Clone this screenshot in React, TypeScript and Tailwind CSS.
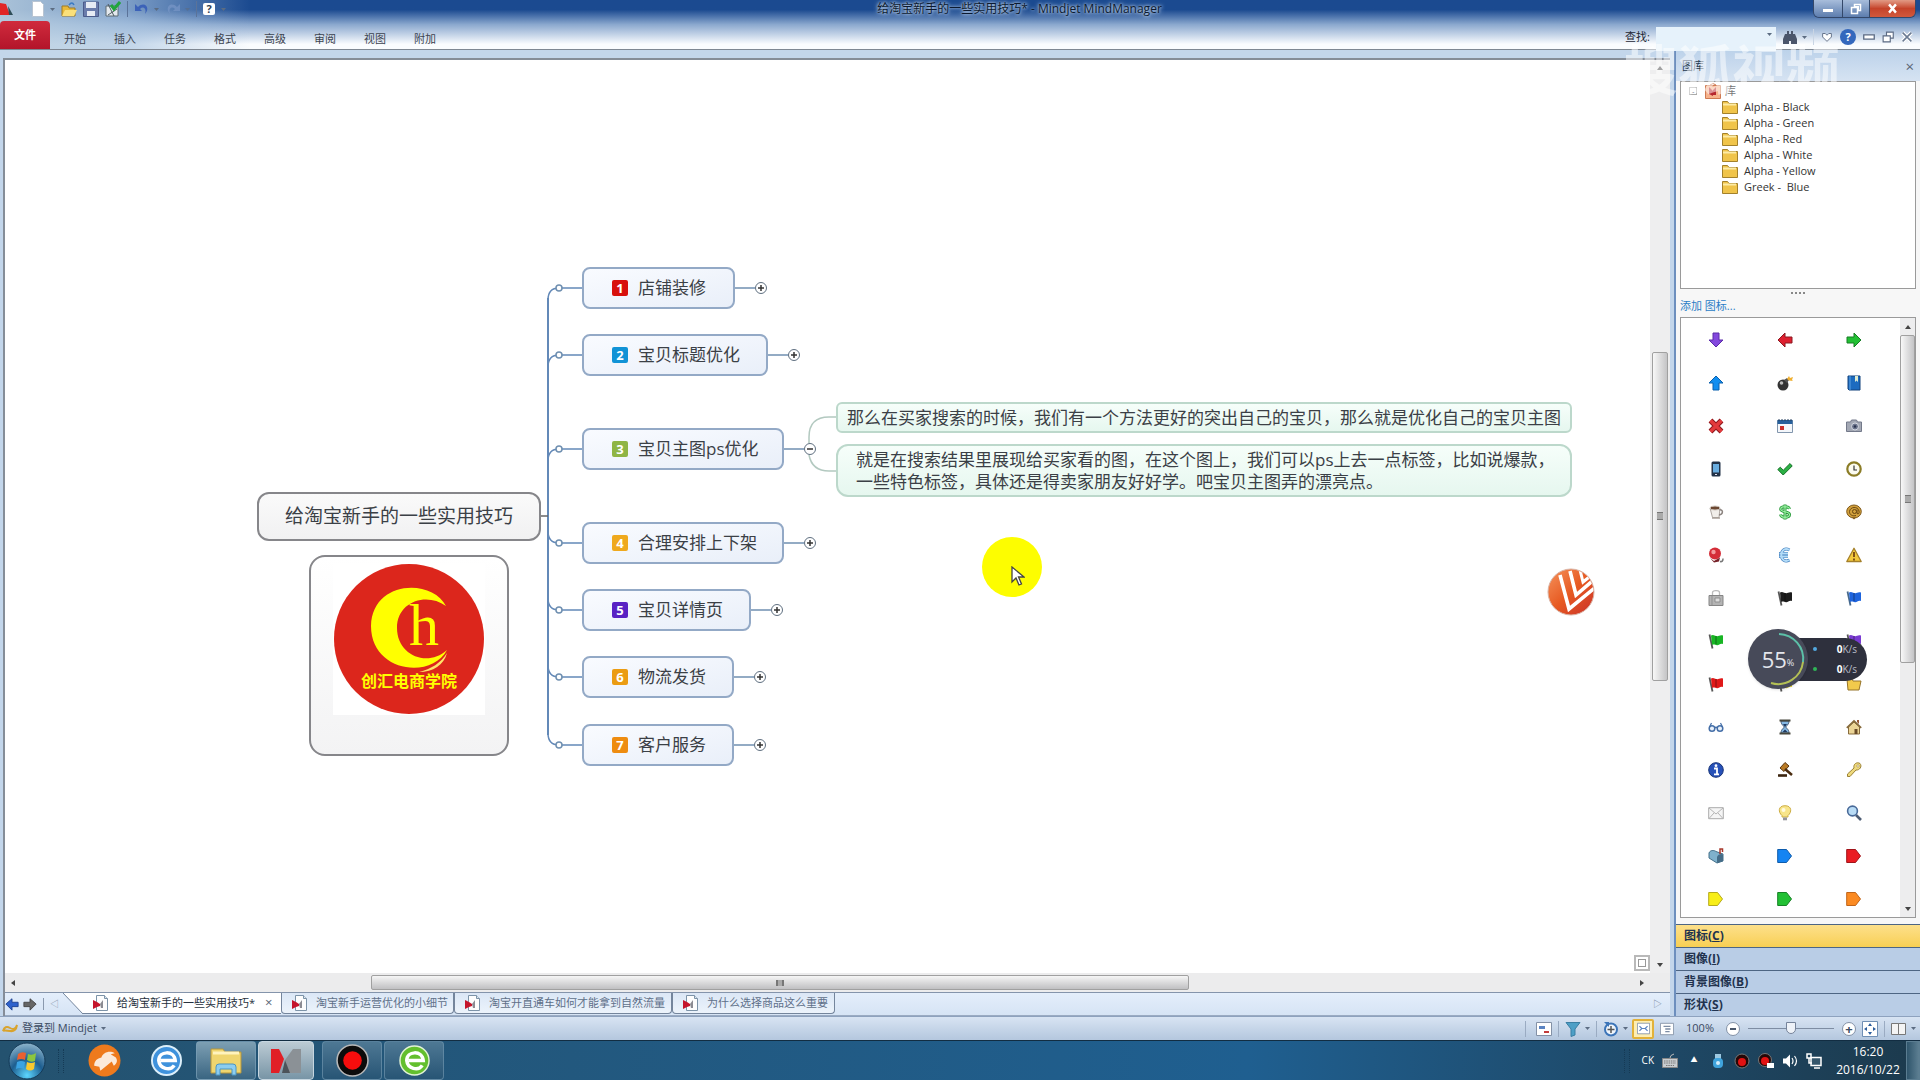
import type { ReactNode } from "react";

const menus = ["开始", "插入", "任务", "格式", "高级", "审阅", "视图", "附加"];

const folders = [
  "Alpha - Black",
  "Alpha - Green",
  "Alpha - Red",
  "Alpha - White",
  "Alpha - Yellow",
  "Greek -  Blue",
];

const branches = [
  { n: 1, label: "店铺装修", y: 228, w: 153, pos: "top-[207px] w-[153px]", badge: "bg-[#d8100c]" },
  { n: 2, label: "宝贝标题优化", y: 295, w: 186, pos: "top-[274px] w-[186px]", badge: "bg-[#1193d6]" },
  { n: 3, label: "宝贝主图ps优化", y: 389, w: 202, pos: "top-[368px] w-[202px]", badge: "bg-[#8fb544]", open: true },
  { n: 4, label: "合理安排上下架", y: 483, w: 202, pos: "top-[462px] w-[202px]", badge: "bg-[#efa91e]" },
  { n: 5, label: "宝贝详情页", y: 550, w: 169, pos: "top-[529px] w-[169px]", badge: "bg-[#5a22c4]" },
  { n: 6, label: "物流发货", y: 617, w: 152, pos: "top-[596px] w-[152px]", badge: "bg-[#eb9c12]" },
  { n: 7, label: "客户服务", y: 685, w: 152, pos: "top-[664px] w-[152px]", badge: "bg-[#ee8c10]" },
];

function Icon({ size = 16, children }: { size?: number; children: ReactNode }) {
  return (
    <svg width={size} height={size} viewBox="0 0 16 16" className="shrink-0" aria-hidden="true">
      {children}
    </svg>
  );
}

function Arrow({ fill, stroke, turn }: { fill: string; stroke: string; turn: number }) {
  return (
    <Icon>
      <path
        d="M5 15V8H1L8 1l7 7h-4v7z"
        transform={`rotate(${turn} 8 8)`}
        fill={fill}
        stroke={stroke}
        strokeLinejoin="round"
      />
    </Icon>
  );
}

function Flag({ fill, pole = "#555" }: { fill: string; pole?: string }) {
  return (
    <Icon>
      <path d="M1.5 1.5l3 14" stroke={pole} strokeWidth="1.8" />
      <path d="M3 2.5c3-2 5 2 8 .3 1.500-.8 2.500-.8 4-.3v8.500c-3-1-4 1.500-6 1.200-2-.2-3-1.200-5-.2z" fill={fill} />
      <path d="M8 3v8" stroke="#000" strokeOpacity=".2" strokeWidth="2" />
    </Icon>
  );
}

function Tag({ fill, stroke }: { fill: string; stroke: string }) {
  return (
    <Icon>
      <path d="M.7 1.500h8.800l5 6.500-5 6.500H.7z" fill={fill} stroke={stroke} strokeLinejoin="round" />
    </Icon>
  );
}

const icons: { name: string; art: ReactNode }[] = [
  { name: "purple down", art: <Arrow fill="#8348dd" stroke="#5a2aa8" turn={180} /> },
  { name: "red left", art: <Arrow fill="#dd2030" stroke="#8c1820" turn={270} /> },
  { name: "green right", art: <Arrow fill="#22c034" stroke="#167d24" turn={90} /> },
  { name: "blue up", art: <Arrow fill="#118ef0" stroke="#0a61ae" turn={0} /> },
  {
    name: "bomb",
    art: (
      <Icon>
        <circle cx="6" cy="10" r="5.500" fill="#333" />
        <circle cx="4.500" cy="8" r="1.800" fill="#bbb" />
        <path d="M7 5l3-2 2 2-2 3z" fill="#555" />
        <path d="M10 4l2-3 1 2 3-1-1 3 1 1-4-.500z" fill="#f0b030" />
      </Icon>
    ),
  },
  {
    name: "book",
    art: (
      <Icon>
        <path d="M2 1h12v14H3L2 14z" fill="#1c6bc0" stroke="#12427c" />
        <path d="M4 1v14" stroke="#5aa2e4" />
        <path d="M9 1h3v6l-1.500-1.500L9 7z" fill="#dfeccf" />
      </Icon>
    ),
  },
  {
    name: "cross",
    art: (
      <Icon>
        <path d="M2.500 2.500l11 11M13.500 2.500l-11 11" stroke="#8d181c" strokeWidth="5.400" />
        <path d="M2.500 2.500l11 11M13.500 2.500l-11 11" stroke="#e33a3c" strokeWidth="3.400" />
      </Icon>
    ),
  },
  {
    name: "calendar",
    art: (
      <Icon>
        <path d="M.5 2.500h15v12H.5z" fill="#f4f7fb" stroke="#8296ad" />
        <path d="M.5 2h15v4H.5z" fill="#27609c" />
        <path d="M2 1v2M5 1v2M8 1v2M11 1v2M14 1v2" stroke="#27415e" />
        <path d="M3 8h4v4H3z" fill="#c9302c" />
      </Icon>
    ),
  },
  {
    name: "camera",
    art: (
      <Icon>
        <path d="M.5 4h4l1-2h5l1 2h4v9.500H.5z" fill="#a3a8b4" stroke="#73798a" />
        <circle cx="9" cy="8.500" r="3.500" fill="#6e778e" stroke="#d5d9e2" />
        <circle cx="9" cy="8.500" r="1.300" fill="#2b3550" />
      </Icon>
    ),
  },
  {
    name: "phone",
    art: (
      <Icon>
        <rect x="3.500" y=".5" width="9" height="15" rx="1.500" fill="#223248" />
        <path d="M5 3h6v8.500H5z" fill="#68acdf" />
        <path d="M7 13.500h2" stroke="#dde" />
      </Icon>
    ),
  },
  {
    name: "check",
    art: (
      <Icon>
        <path d="M.8 8.500l2.500-2.300 3 3L13 2.500 15.200 5l-9 9z" fill="#2bb044" stroke="#157228" strokeLinejoin="round" />
      </Icon>
    ),
  },
  {
    name: "clock",
    art: (
      <Icon>
        <circle cx="8" cy="8" r="6.700" fill="#fbfbf0" stroke="#8b7c26" strokeWidth="2.200" />
        <path d="M8 4.500V9h3" fill="none" stroke="#333" strokeWidth="1.200" />
      </Icon>
    ),
  },
  {
    name: "coffee",
    art: (
      <Icon>
        <path d="M2 4h10l-1 9.500H4.500z" fill="#f1eeea" stroke="#9b928b" strokeWidth=".8" />
        <ellipse cx="7" cy="4" rx="5" ry="2" fill="#6b4731" stroke="#cfc6bf" />
        <path d="M11.500 6c4-1 4 4.500-.5 5" fill="none" stroke="#8c8480" strokeWidth="1.500" />
        <path d="M4 14h8" stroke="#a89f99" strokeWidth="1.500" />
      </Icon>
    ),
  },
  {
    name: "dollar",
    art: (
      <Icon>
        <path
          d="M12.500 5C12 3 10 2.700 8 2.700 5.500 2.700 3.700 3.500 3.700 5.300c0 3.200 8.800 1.700 8.800 5.200 0 2-2 2.800-4.500 2.800-2.300 0-4-.8-4.500-2.800M8 .5v15"
          fill="none"
          stroke="#269a38"
          strokeWidth="3"
        />
        <path
          d="M12.500 5C12 3 10 2.700 8 2.700 5.500 2.700 3.700 3.500 3.700 5.300c0 3.200 8.800 1.700 8.800 5.200 0 2-2 2.800-4.500 2.800-2.300 0-4-.8-4.500-2.800M8 1v14"
          fill="none"
          stroke="#9df0a4"
          strokeWidth="1.200"
        />
      </Icon>
    ),
  },
  {
    name: "mail address",
    art: (
      <Icon>
        <ellipse cx="8" cy="7.500" rx="7.300" ry="6.500" fill="#d2a13c" stroke="#80591a" />
        <path d="M11 5.500v4c1.500 1 2.500-.3 2-2.500C12 2 4 2.500 3.500 7.500 3.300 11 7 12.500 10 11.500" fill="none" stroke="#6b4712" />
        <circle cx="8.500" cy="7.500" r="2" fill="none" stroke="#6b4712" />
        <path d="M6 13.500l2 2 2-2z" fill="#80591a" />
      </Icon>
    ),
  },
  {
    name: "bell",
    art: (
      <Icon>
        <circle cx="7" cy="6.500" r="6" fill="#d42d38" />
        <circle cx="5.500" cy="5" r="2.200" fill="#f39a9d" />
        <path d="M2 11l4 3 6-3.500-1 4-5 1z" fill="#772229" />
        <path d="M12 14.500c2 .5 3-.5 3-3" fill="none" stroke="#777" strokeWidth="1.500" />
      </Icon>
    ),
  },
  {
    name: "euro",
    art: (
      <Icon>
        <path d="M12.500 3C8 .5 4.500 3 4.300 8c.2 5 3.700 7.500 8.200 5M2 6.500h9M2 9.500h9" fill="none" stroke="#3f7cbd" strokeWidth="3" />
        <path d="M12.500 3C8 .5 4.500 3 4.300 8c.2 5 3.700 7.500 8.200 5M2.500 6.500H11M2.500 9.500H11" fill="none" stroke="#b3dcf8" strokeWidth="1.800" />
      </Icon>
    ),
  },
  {
    name: "warning",
    art: (
      <Icon>
        <path d="M8 1.200l7.200 13.300H.8z" fill="#f3c93c" stroke="#a5802a" strokeWidth="1.300" strokeLinejoin="round" />
        <path d="M8 5v5M8 11.500v2" stroke="#6e3f10" strokeWidth="1.700" />
      </Icon>
    ),
  },
  {
    name: "bag",
    art: (
      <Icon>
        <path d="M4.500 5V2.500C4.500 0 11.500 0 11.500 2.500V5" fill="none" stroke="#bbb" strokeWidth="1.300" />
        <path d="M1 5.500h14v10H1z" fill="#b4b4b4" stroke="#858585" />
        <path d="M4 6v9M7 8h5v4H7z" fill="#ddd" stroke="#8f8f8f" />
      </Icon>
    ),
  },
  { name: "black flag", art: <Flag fill="#1c1c1c" /> },
  { name: "blue flag", art: <Flag fill="#1d63dd" pole="#47698c" /> },
  { name: "green flag", art: <Flag fill="#18b524" /> },
  { name: "orange flag", art: <Flag fill="#ef8a1c" /> },
  { name: "purple flag", art: <Flag fill="#7a3bd2" /> },
  { name: "red flag", art: <Flag fill="#e01818" /> },
  { name: "yellow flag", art: <Flag fill="#eedc1c" /> },
  {
    name: "folder",
    art: (
      <Icon>
        <path d="M1 3h5l1 2h8l-2 9H2z" fill="#f2ca4c" stroke="#96742a" strokeLinejoin="round" />
      </Icon>
    ),
  },
  {
    name: "glasses",
    art: (
      <Icon>
        <circle cx="4" cy="9.500" r="2.800" fill="#eaf2fb" stroke="#456fa8" strokeWidth="1.500" />
        <circle cx="12" cy="9.500" r="2.800" fill="#eaf2fb" stroke="#456fa8" strokeWidth="1.500" />
        <path d="M6.500 9q1.500-1.500 3 0M1.500 8l2-4M14.500 8l-2-4" fill="none" stroke="#456fa8" strokeWidth="1.200" />
      </Icon>
    ),
  },
  {
    name: "hourglass",
    art: (
      <Icon>
        <path d="M4 2h8c0 4-3 4.500-3 6s3 2 3 6H4c0-4 3-4.500 3-6S4 6 4 2z" fill="#84b7e2" stroke="#42566e" />
        <path d="M2.500 1.500h11M2.500 14.500h11" stroke="#47473c" strokeWidth="2" />
        <path d="M6 5h4L8 8zM5.500 13L8 10.500l2.500 2.500z" fill="#1f3a60" />
      </Icon>
    ),
  },
  {
    name: "house",
    art: (
      <Icon>
        <path d="M2.500 8v7h11V8L8 3z" fill="#ecd596" stroke="#876b3c" />
        <path d="M.8 8.800L8 2l7.200 6.800" fill="none" stroke="#876b3c" strokeWidth="1.700" />
        <path d="M11 1h2v4l-2-2z" fill="#9a5a36" />
        <path d="M8.500 10h3v5h-3z" fill="#6b4c28" />
      </Icon>
    ),
  },
  {
    name: "info",
    art: (
      <Icon>
        <circle cx="8" cy="8" r="7.300" fill="#2751b8" stroke="#183478" />
        <path d="M6 6.500h3V12M6 12.300h5" fill="none" stroke="#fff" strokeWidth="1.800" />
        <circle cx="8" cy="3.700" r="1.400" fill="#fff" />
      </Icon>
    ),
  },
  {
    name: "gavel",
    art: (
      <Icon>
        <path d="M3 6l5-5.500 4 3.500-5 5.500z" fill="#b87a25" stroke="#5b3712" />
        <path d="M8 7l7 6" stroke="#4a2c10" strokeWidth="2.500" />
        <path d="M1 13.500h9" stroke="#3b240e" strokeWidth="2.600" />
      </Icon>
    ),
  },
  {
    name: "key",
    art: (
      <Icon>
        <path d="M8 6c-1-4 3-6.500 6-4.500 2.500 3-.5 7-4 6.500L4 14.500H1.500V12z" fill="#eed97c" stroke="#9c8235" strokeLinejoin="round" />
        <circle cx="12" cy="4" r="1.200" fill="#fff" stroke="#9c8235" strokeWidth=".6" />
      </Icon>
    ),
  },
  {
    name: "letter",
    art: (
      <Icon>
        <path d="M.7 2.700h14.600v11H.7z" fill="#f5f5f5" stroke="#aaa" />
        <path d="M1 3l7 6 7-6M1 13.500L6 8M15 13.500L10 8" fill="none" stroke="#b5b5b5" />
      </Icon>
    ),
  },
  {
    name: "bulb",
    art: (
      <Icon>
        <path d="M8 .7c-7 0-7 6.500-3 9.800V12h6v-1.500C15 7.200 15 .7 8 .7z" fill="#f8e58a" stroke="#cdae44" />
        <path d="M6 12.500h4v2.800H6z" fill="#96969c" />
        <circle cx="6.500" cy="5" r="2" fill="#fffbe0" />
      </Icon>
    ),
  },
  {
    name: "magnifier",
    art: (
      <Icon>
        <path d="M10 10l5 5" stroke="#4e5d74" strokeWidth="2.600" />
        <circle cx="6.500" cy="6" r="4.900" fill="#b9dcf6" stroke="#496a99" strokeWidth="1.600" />
      </Icon>
    ),
  },
  {
    name: "mailbox",
    art: (
      <Icon>
        <path d="M1 5c1-3 5-3 7-1.500L15 6v7l-6 2-8-5z" fill="#7fb1cc" stroke="#44708a" />
        <path d="M9 15V9c1-3 5-4 6-2v6z" fill="#456d88" />
        <path d="M12 6V1h2.500v3" fill="none" stroke="#a8382c" strokeWidth="1.500" />
      </Icon>
    ),
  },
  { name: "blue tag", art: <Tag fill="#1484f2" stroke="#0e5cac" /> },
  { name: "red tag", art: <Tag fill="#ea1c22" stroke="#a1141a" /> },
  { name: "yellow tag", art: <Tag fill="#f8ee18" stroke="#b5aa1c" /> },
  { name: "green tag", art: <Tag fill="#22c034" stroke="#178226" /> },
  { name: "orange tag", art: <Tag fill="#fb8a22" stroke="#c0651a" /> },
];

function MapIcon() {
  return (
    <Icon>
      <path d="M3.500.5h8l3 3v12h-11z" fill="#fdfdfd" stroke="#7c93a8" />
      <path d="M11.500.5v3h3" fill="#dde8f0" stroke="#7c93a8" />
      <path d="M0 5l4 2 3 2v2l-3 1-4 2z" fill="#c5152c" />
      <path d="M7 9l3-4v8H8z" fill="#8b8b92" />
    </Icon>
  );
}

function FolderIcon() {
  return (
    <Icon>
      <path d="M.5 2.500h5l1.500 2h8.500v10H.5z" fill="#f0c44a" stroke="#a3812b" strokeLinejoin="round" />
      <path d="M1 5.500h13" stroke="#fdeba5" strokeWidth="2" />
    </Icon>
  );
}

function Caret() {
  return (
    <svg width="5" height="3" viewBox="0 0 5 3" className="shrink-0" aria-hidden="true">
      <path d="M0 0h5L2.500 3z" fill="#5c6c82" />
    </svg>
  );
}

function ScrollArrow({ turn }: { turn: number }) {
  return (
    <svg width="8" height="8" viewBox="0 0 8 8" aria-hidden="true">
      <path d="M1 6h6L4 2z" transform={`rotate(${turn} 4 4)`} fill="#444" />
    </svg>
  );
}

function QuickAccess() {
  return (
    <div className="flex items-center gap-1.5">
      <Icon>
        <path d="M0 2l6 1 4 11H0z" fill="#e12626" />
        <path d="M8 5l5 9H9z" fill="#2f4d58" />
      </Icon>
      <button aria-label="新建" className="ml-2 flex items-center gap-1">
        <Icon>
          <path d="M2.500.5h8l3 3v12h-11z" fill="#fff" stroke="#b8c4d2" />
        </Icon>
        <Caret />
      </button>
      <button aria-label="打开">
        <Icon>
          <path d="M1 5h6l1 2h6v8H1z" fill="#e8b93a" stroke="#9d7b25" />
          <path d="M4 9h12l-3 6H1z" fill="#fbe07a" />
          <path d="M8 4q3-4 5 0" fill="none" stroke="#3979c4" strokeWidth="1.500" />
        </Icon>
      </button>
      <button aria-label="保存">
        <Icon>
          <path d="M.5 1h15v14.500H.5z" fill="#6a7cab" stroke="#4b5b8a" />
          <path d="M3 1h10v6H3zM4 10h8v5H4z" fill="#e6ebf4" />
        </Icon>
      </button>
      <button aria-label="发送">
        <Icon>
          <path d="M1 5h12v10H1z" fill="#e4e9ee" stroke="#5d6b73" />
          <path d="M3 3l6 12M3 14l9-6" stroke="#4c5960" />
          <path d="M6 4l3 4 6-7" fill="none" stroke="#21a53c" strokeWidth="3" />
        </Icon>
      </button>
      <span className="h-4 w-px bg-[#5b7399]" />
      <button aria-label="撤消" className="flex items-center gap-1">
        <Icon>
          <path d="M1 3v7h7L6 8c3-3 7-1 5 5C17 6 10 0 4 6z" fill="#3c62b8" />
        </Icon>
        <Caret />
      </button>
      <button aria-label="重做" className="flex items-center gap-1 opacity-60">
        <Icon>
          <path d="M15 3v7H8l2-2C7 5 3 7 5 13-1 6 6 0 12 6z" fill="#7f9bcb" />
        </Icon>
        <Caret />
      </button>
      <span className="h-4 w-px bg-[#5b7399]" />
      <button aria-label="帮助" className="flex size-3 items-center justify-center rounded-xs bg-white text-[11px] leading-3 font-bold text-[#333f52]">
        ?
      </button>
      <Caret />
    </div>
  );
}

function Header() {
  return (
    <header className="relative flex h-[50px] flex-col border-b border-[#7e8792] bg-linear-to-b from-[#1b4a90] from-20% via-[#8ba8ce] via-50% to-[#fafcfe] to-90%">
      <div className="pointer-events-none absolute inset-y-0 left-0 w-[250px] bg-linear-to-r from-[#b9cfe0]/90 via-[#a9c4e0]/70 to-transparent" />
      <div className="relative flex h-6 items-start justify-between">
        <div className="flex pt-px">
          <QuickAccess />
        </div>
        <h1 className="pt-px text-[12px] leading-4 text-[#0c1a30] [text-shadow:0_0_5px_#cfe0f4,0_0_3px_#cfe0f4]">
          给淘宝新手的一些实用技巧* - Mindjet MindManager
        </h1>
        <div className="flex pr-1">
          <div className="flex h-[18px] overflow-hidden rounded-b-md border border-t-0 border-[#34486a]">
            <button aria-label="最小化" className="flex w-7 items-center justify-center bg-linear-to-b from-[#a8bddb] to-[#5d7dae]">
              <span className="mt-1 h-[3px] w-2.5 bg-white" />
            </button>
            <button aria-label="还原" className="flex w-7 items-center justify-center border-x border-[#34486a] bg-linear-to-b from-[#a8bddb] to-[#5d7dae]">
              <Icon size={12}>
                <path d="M6 2h8v8h-3V5H6zM2 6h8v8H2z" fill="none" stroke="#fff" strokeWidth="2" />
              </Icon>
            </button>
            <button aria-label="关闭" className="flex w-[45px] items-center justify-center bg-linear-to-b from-[#e19a85] via-[#c5432a] to-[#d2583c]">
              <Icon size={11}>
                <path d="M3 2l10 12M13 2L3 14" stroke="#fff" strokeWidth="3.500" />
              </Icon>
            </button>
          </div>
        </div>
      </div>
      <div className="relative flex flex-1 items-stretch justify-between">
        <nav className="flex">
          <button className="w-[50px] rounded-t-sm bg-linear-to-b from-[#d02a3d] to-[#b3142a] text-[11px] font-bold text-white">文件</button>
          {menus.map((m) => (
            <button key={m} className="w-[50px] pt-2 text-[11px] text-[#3c4450]">
              {m}
            </button>
          ))}
        </nav>
        <div className="flex items-center gap-1.5 pt-1 pr-1.5">
          <label htmlFor="find" className="text-[11px] leading-4 text-[#1d2634]">
            查找:
          </label>
          <div className="relative h-full">
            <input id="find" className="h-full w-[120px] bg-[#e6f2fb] px-1 text-[11px] outline-none" />
            <span className="absolute top-2 right-1">
              <Caret />
            </span>
          </div>
          <button aria-label="查找主题" className="flex items-center gap-1">
            <Icon>
              <path d="M3 5h2V2h2v3h2V2h2v3h2l2 5v5H9v-3H7v3H1v-5z" fill="#4a556b" />
            </Icon>
            <Caret />
          </button>
          <span className="h-4 w-px bg-[#c9d5e4]" />
          <button aria-label="收起">
            <Icon size={14}>
              <path d="M3 4h3l2 2 2-2h3v4l-5 5-5-5z" fill="#fff" stroke="#56657e" />
            </Icon>
          </button>
          <button aria-label="帮助主题" className="flex size-4 items-center justify-center rounded-full bg-[#3468bd] text-[11px] font-bold text-white">
            ?
          </button>
          <button aria-label="最小化文档">
            <Icon size={14}>
              <path d="M2 5.500h12v5H2z" fill="#fff" stroke="#5b6a83" strokeWidth="1.500" />
            </Icon>
          </button>
          <button aria-label="还原文档">
            <Icon size={12}>
              <path d="M6 1.500h9v8h-4v5H1.500v-8H6z M6 6.500h5v3" fill="#fff" stroke="#5b6a83" strokeWidth="1.500" />
            </Icon>
          </button>
          <button aria-label="关闭文档">
            <Icon size={14}>
              <path d="M3 3l10 10M13 3L3 13" stroke="#fff" strokeWidth="4.500" />
              <path d="M3 3l10 10M13 3L3 13" stroke="#6b7b93" strokeWidth="1.800" />
            </Icon>
          </button>
        </div>
      </div>
    </header>
  );
}

function Connectors() {
  return (
    <svg className="absolute inset-0 size-full" fill="none" aria-hidden="true">
      <g stroke="#6389b8" strokeWidth="1.500">
        <path d="M543 238V675" strokeWidth="2" />
        {branches.map((b) => (
          <path key={b.n} d={b.y < 456 ? `M543 ${b.y + 12}q0-12 11-12H577` : `M543 ${b.y - 12}q0 12 11 12H577`} />
        ))}
        <path d="M536 456h7" stroke="#666" />
        {branches.map((b) => (
          <g key={b.n} stroke="#6f8fb0">
            <circle cx="554" cy={b.y} r="3" fill="#fff" />
            <path d={`M${577 + b.w} ${b.y}h20`} />
          </g>
        ))}
      </g>
      <path d="M804 383v-6q0-20 20-20h7M804 395q3 16 20 16h7" stroke="#b3c9c0" strokeWidth="1.500" />
      {branches.map((b) => (
        <g key={b.n} stroke="#5f6f80">
          <circle cx={577 + b.w + 26} cy={b.y} r="5.500" fill="#fff" />
          <path d={`M${577 + b.w + 23} ${b.y}h6`} stroke="#333" strokeWidth="1.500" />
          {!b.open && <path d={`M${577 + b.w + 26} ${b.y - 3}v6`} stroke="#333" strokeWidth="1.500" />}
        </g>
      ))}
    </svg>
  );
}

function AcademyLogo() {
  return (
    <div className="relative mx-auto mt-1.5 flex size-[152px] justify-center bg-white">
      <svg width="152" height="152" viewBox="0 0 152 152" role="img" aria-label="创汇电商学院">
        <circle cx="76" cy="76" r="75" fill="#dc261c" />
        <path d="M113 43C99 15 39 17 38 63c0 46 60 54 76 24C94 105 64 92 64 65c0-27 30-36 49-22z" fill="#ff0" />
        <path d="M86 109c12-3 22-9 28-19-3 12-14 19-28 19z" fill="#ffe46a" />
      </svg>
      <span className="absolute top-[28px] left-[76px] font-[Liberation_Serif,serif] text-[60px] leading-[68px] text-[#ff0]">h</span>
      <span className="absolute top-[108px] text-[16px] leading-5 font-bold whitespace-nowrap text-[#ff0]">创汇电商学院</span>
    </div>
  );
}

function MindMap() {
  return (
    <div className="relative min-w-0 flex-1 overflow-hidden bg-white text-[#3b4046]">
      <Connectors />
      <div className="absolute top-[432px] left-[252px] flex h-[49px] w-[284px] items-center justify-center rounded-xl border-2 border-[#86868a] bg-linear-to-b from-[#fafafa] to-[#f1f1f2] text-[19px]">
        给淘宝新手的一些实用技巧
      </div>
      <div className="absolute top-[495px] left-[304px] h-[201px] w-[200px] rounded-2xl border-2 border-[#86868a] bg-linear-to-b from-white to-[#f3f3f4]">
        <AcademyLogo />
      </div>
      {branches.map((b) => (
        <div
          key={b.n}
          className={`absolute left-[577px] flex h-[42px] items-center gap-2.5 rounded-lg border-2 border-[#93a9c6] bg-linear-to-br from-[#f9fbff] to-[#e9eff9] pl-[28px] text-[17px] whitespace-nowrap ${b.pos}`}
        >
          <span className={`flex size-4 items-center justify-center rounded-xs text-[13px] leading-4 font-bold text-white ${b.badge}`}>{b.n}</span>
          {b.label}
        </div>
      ))}
      <div className="absolute top-[342px] left-[831px] flex h-[31px] w-[736px] items-center justify-center rounded-md border-2 border-[#bcd8cb] bg-linear-to-b from-[#f6fefa] to-[#e6f7ef] text-[17px] whitespace-nowrap">
        那么在买家搜索的时候，我们有一个方法更好的突出自己的宝贝，那么就是优化自己的宝贝主图
      </div>
      <div className="absolute top-[384px] left-[831px] flex h-[53px] w-[736px] flex-col justify-center rounded-xl border-2 border-[#bcd8cb] bg-linear-to-b from-[#f6fefa] to-[#e6f7ef] px-[18px] text-[17px] leading-[22px] whitespace-nowrap">
        <p>就是在搜索结果里展现给买家看的图，在这个图上，我们可以ps上去一点标签，比如说爆款，</p>
        <p>一些特色标签，具体还是得卖家朋友好好学。吧宝贝主图弄的漂亮点。</p>
      </div>
      <div className="absolute top-[477px] left-[977px] size-[60px] rounded-full bg-[#fdfd00]" />
      <svg width="14" height="20" viewBox="0 0 14 20" className="absolute top-[506px] left-[1006px]" aria-hidden="true">
        <path d="M1 1v15l4-4 3 7 2.500-1-3-7H13z" fill="#fff" stroke="#444" strokeWidth="1.300" />
      </svg>
      <svg width="48" height="48" viewBox="0 0 48 48" className="absolute top-[508px] left-[1542px]" aria-hidden="true">
        <defs>
          <linearGradient id="ball" x1="0" y1="0" x2="1" y2="1">
            <stop offset="0" stopColor="#f5935c" />
            <stop offset=".5" stopColor="#e75a22" />
            <stop offset="1" stopColor="#c9302a" />
          </linearGradient>
          <clipPath id="ballClip">
            <circle cx="24" cy="24" r="22.500" />
          </clipPath>
        </defs>
        <circle cx="24" cy="24" r="23" fill="url(#ball)" stroke="#d9b3a5" />
        <g clipPath="url(#ballClip)" fill="none" stroke="#fff" strokeWidth="3.600">
          <path d="M13 7l9 34L50 18" />
          <path d="M23 3l6 24L50 9" />
          <path d="M33 2l3 12 10-8" strokeWidth="3" />
        </g>
      </svg>
      <button aria-label="导航图" className="absolute right-0 bottom-0.5 flex size-4 items-center justify-center border-2 border-[#b9b9b9] bg-white">
        <span className="size-2 border border-[#999]" />
      </button>
    </div>
  );
}

function Workspace() {
  return (
    <main className="flex min-w-0 flex-1 flex-col border-t-2 border-l-2 border-[#858d98]">
      <div className="flex min-h-0 flex-1">
        <MindMap />
        <div className="relative flex w-5 flex-col items-center justify-between bg-[#eeeeef] py-1">
          <button aria-label="向上滚动">
            <ScrollArrow turn={0} />
          </button>
          <div className="absolute inset-x-0.5 top-[32%] flex h-[36%] items-center justify-center rounded-xs border border-[#a0a0a0] bg-linear-to-r from-[#f8f8f8] to-[#c4c4c6]">
            <span className="h-2 w-1.5 border-y border-[#777] bg-[#aaa]" />
          </div>
          <button aria-label="向下滚动">
            <ScrollArrow turn={180} />
          </button>
        </div>
      </div>
      <div className="flex h-[19px] items-center justify-between bg-[#ececed] pr-6 pl-1">
        <button aria-label="向左滚动">
          <ScrollArrow turn={270} />
        </button>
        <div className="flex flex-1 px-[24px]">
          <div className="ml-[21%] flex h-[15px] w-[52%] items-center justify-center rounded-xs border border-[#a0a0a0] bg-linear-to-b from-[#f6f6f6] to-[#c0c0c2]">
            <span className="h-1.5 w-2 border-x-2 border-[#777] bg-[#aaa]" />
          </div>
        </div>
        <button aria-label="向右滚动">
          <ScrollArrow turn={90} />
        </button>
      </div>
      <DocTabs />
    </main>
  );
}

const docs = [
  { title: "淘宝新手运营优化的小细节", width: "w-[173px]" },
  { title: "淘宝开直通车如何才能拿到自然流量", width: "w-[218px]" },
  { title: "为什么选择商品这么重要", width: "w-[163px]" },
];

function DocTabs() {
  return (
    <div className="flex h-6 items-start border-y border-[#9aabc2] border-t-[#8494ab] bg-linear-to-b from-[#e4eefb] to-[#d6e4f5] text-[11px]">
      <div className="flex h-full w-[58px] items-center gap-1">
        <button aria-label="后退">
          <Icon size={14}>
            <path d="M8 2v4h7v5H8v4L1 8z" fill="#2f62cc" stroke="#1b3f8e" />
          </Icon>
        </button>
        <button aria-label="前进">
          <Icon size={14}>
            <path d="M8 2v4H1v5h7v4l7-7z" fill="#666" stroke="#444" />
          </Icon>
        </button>
        <span className="ml-0.5 h-3 w-px bg-[#8a99ae]" />
        <span className="ml-0.5 text-[9px] text-[#8a99ae]">◁</span>
      </div>
      <svg width="20" height="21" viewBox="0 0 20 21" className="shrink-0" aria-hidden="true">
        <path d="M0 0l20 21V0z" fill="#fff" />
        <path d="M0 0l20 21" stroke="#74859c" />
      </svg>
      <button className="flex h-[21px] w-[198px] items-center gap-2 border-b border-[#74859c] bg-white pl-2.5 text-[#26303d]">
        <MapIcon />
        <span className="whitespace-nowrap">给淘宝新手的一些实用技巧*</span>
        <span className="ml-0.5 text-[13px] text-[#5a6575]">×</span>
      </button>
      {docs.map((d) => (
        <button
          key={d.title}
          className={`flex h-[21px] items-center gap-2 rounded-b-sm border border-t-0 border-[#74859c] bg-linear-to-b from-[#dbe7f6] to-[#ecf3fb] pl-2.5 text-[#5f7089] ${d.width}`}
        >
          <MapIcon />
          <span className="whitespace-nowrap">{d.title}</span>
        </button>
      ))}
      <span className="ml-auto pt-1 pr-2 text-[9px] text-[#77879c]">▷</span>
    </div>
  );
}

const sections = [
  { name: "图标", k: "C" },
  { name: "图像", k: "I" },
  { name: "背景图像", k: "B" },
  { name: "形状", k: "S" },
];

function Library() {
  return (
    <aside className="flex w-[246px] shrink-0 flex-col border-l-2 border-[#6d8fbe] bg-[#f7f7f7] text-[11px]">
      <div className="flex h-[31px] items-center justify-between bg-linear-to-b from-[#bcd2ea] to-[#d6e3f2] pr-1.5 pl-1.5">
        <h2 className="leading-4 text-[#24384f]">图库</h2>
        <button aria-label="关闭图库" className="text-[15px] leading-4 text-[#5a6575]">×</button>
      </div>
      <div className="mr-1 ml-1 h-[208px] border border-[#9a9a9a] bg-white px-2 pt-px text-[#333]">
        <div className="flex h-4 items-center gap-2">
          <span className="flex size-2 items-center justify-center border border-[#aaa] text-[8px]">-</span>
          <Icon>
            <path d="M.5 2.500h15v13H.5z" fill="#f6b28c" stroke="#cf7a52" />
            <path d="M4 4l4 4v5L4 11zM8 7l3-3v8H8z" fill="#b7262e" />
            <path d="M5 2q3-3 6 0" fill="none" stroke="#cf7a52" />
          </Icon>
          <span className="-ml-1 text-[#777]">库</span>
        </div>
        <ul>
          {folders.map((f) => (
            <li key={f} className="flex h-4 items-center gap-1.5 pl-[33px] whitespace-pre">
              <FolderIcon />
              {f}
            </li>
          ))}
        </ul>
      </div>
      <div className="flex h-2 items-center justify-center gap-0.5">
        <span className="size-0.5 bg-[#888]" />
        <span className="size-0.5 bg-[#888]" />
        <span className="size-0.5 bg-[#888]" />
        <span className="size-0.5 bg-[#888]" />
      </div>
      <a href="#add" className="h-5 pt-px pl-1 leading-4 text-[#2a7cc6]">
        添加 图标...
      </a>
      <div className="mr-1 ml-1 flex min-h-0 flex-1 overflow-hidden border border-[#9a9a9a] bg-white">
        <div className="grid flex-1 auto-rows-[43px] grid-cols-3 pr-3">
          {icons.map((i) => (
            <button key={i.name} aria-label={i.name} className="flex items-center justify-center">
              {i.art}
            </button>
          ))}
        </div>
        <div className="flex w-[15px] flex-col items-center bg-[#ededee]">
          <button aria-label="图标向上滚动" className="h-[17px]">
            <ScrollArrow turn={0} />
          </button>
          <div className="flex h-[328px] w-full items-center justify-center rounded-xs border border-[#a0a0a0] bg-linear-to-r from-[#f8f8f8] to-[#c4c4c6]">
            <span className="h-2 w-1.5 border-y border-[#777] bg-[#aaa]" />
          </div>
          <button aria-label="图标向下滚动" className="mt-auto h-[17px]">
            <ScrollArrow turn={180} />
          </button>
        </div>
      </div>
      <div className="mt-1.5">
        {sections.map((s, i) => (
          <button
            key={s.k}
            className={`flex h-[23px] w-full items-center border-t border-[#4d6583] pl-2 text-[12px] font-bold text-[#22334e] ${
              i === 0 ? "bg-linear-to-b from-[#fde08a] to-[#f8cf52]" : "bg-[#b9cde6]"
            }`}
          >
            {s.name}(<u>{s.k}</u>)
          </button>
        ))}
      </div>
    </aside>
  );
}

function StatusBar() {
  return (
    <footer className="flex h-6 items-center justify-between border-t border-[#8ea2be] bg-linear-to-b from-[#d8e4f3] to-[#b4c7de] text-[11px] text-[#3b4a61]">
      <button className="flex items-center gap-1 pl-0.5">
        <Icon>
          <path d="M1 10q2-6 7-3t7-3q-1 7-7 6t-7 0z" fill="none" stroke="#d9a32d" strokeWidth="2" />
        </Icon>
        登录到 Mindjet
        <Caret />
      </button>
      <div className="flex items-center pr-1">
        <span className="mr-2.5 h-4 w-px bg-[#9aabc2]" />
        <button aria-label="显示备注">
          <Icon>
            <path d="M.5 1.500h15v13H.5z" fill="#fff" stroke="#8391a6" />
            <path d="M3 5h6v3H3z" fill="#5b84c2" />
            <path d="M8 11h5" stroke="#c23b3b" strokeWidth="2" />
          </Icon>
        </button>
        <span className="mx-1.5 h-4 w-px bg-[#9aabc2]" />
        <button aria-label="筛选" className="flex items-center gap-1">
          <Icon>
            <path d="M1 1.500h14L10 8v6l-4 1.500V8z" fill="#4d9fc6" stroke="#3a7ea3" />
          </Icon>
          <Caret />
        </button>
        <span className="mx-1.5 h-4 w-px bg-[#9aabc2]" />
        <button aria-label="显示级别" className="flex items-center gap-1">
          <Icon>
            <circle cx="8" cy="8.500" r="6" fill="#eef4fb" stroke="#3b74b8" strokeWidth="2" />
            <path d="M8 5v7M4.500 8.500h7" stroke="#555" strokeWidth="1.500" />
            <path d="M1 1h5v5z" fill="#3b74b8" />
          </Icon>
          <Caret />
        </button>
        <button aria-label="导图视图" className="ml-1 flex h-5 w-[22px] items-center justify-center rounded-xs border-2 border-[#e2b23a] bg-[#fdeeb4]">
          <Icon size={13}>
            <path d="M.5 1.500h15v13H.5z" fill="#fff" stroke="#7c8ca4" />
            <path d="M3 5l3 3-3 3M13 5l-3 3 3 3M6 8h4" fill="none" stroke="#5b84c2" strokeWidth="1.500" />
          </Icon>
        </button>
        <button aria-label="大纲视图" className="ml-1.5">
          <Icon size={14}>
            <path d="M.5 1.500h15v13H.5z" fill="#fff" stroke="#8391a6" />
            <path d="M4 5h8M6 8h6M6 11h5" stroke="#7c8ca4" strokeWidth="1.500" />
          </Icon>
        </button>
        <span className="ml-3">100%</span>
        <button aria-label="缩小" className="ml-3 flex size-[14px] items-center justify-center rounded-full border border-[#8391a6] bg-white">
          <span className="h-0.5 w-1.5 bg-[#4b586c]" />
        </button>
        <input
          type="range"
          aria-label="缩放"
          className="mx-2 h-4 w-[86px] appearance-none bg-transparent [&::-webkit-slider-runnable-track]:h-px [&::-webkit-slider-runnable-track]:bg-[#7e8da3] [&::-webkit-slider-thumb]:-mt-1.5 [&::-webkit-slider-thumb]:h-3 [&::-webkit-slider-thumb]:w-2.5 [&::-webkit-slider-thumb]:appearance-none [&::-webkit-slider-thumb]:rounded-b-full [&::-webkit-slider-thumb]:border [&::-webkit-slider-thumb]:border-[#75839a] [&::-webkit-slider-thumb]:bg-[#eef2f8]"
        />
        <button aria-label="放大" className="flex size-[14px] items-center justify-center rounded-full border border-[#8391a6] bg-white text-[13px] leading-3 font-bold">
          +
        </button>
        <button aria-label="适合窗口" className="ml-1.5">
          <Icon>
            <path d="M.5.5h15v15H.5z" fill="#fff" stroke="#6f8fb5" />
            <path d="M8 2l2 3H6zM8 14l2-3H6zM2 8l3-2v4zM14 8l-3-2v4z" fill="#2c5d9d" />
          </Icon>
        </button>
        <span className="mx-1.5 h-4 w-px bg-[#9aabc2]" />
        <button aria-label="任务窗格" className="flex items-center gap-1">
          <Icon>
            <path d="M.5 2.500h7v11h-7zM7.500 2.500h7v11h-7z" fill="#f4f4f4" stroke="#777" />
          </Icon>
          <Caret />
        </button>
      </div>
    </footer>
  );
}

function Taskbar() {
  return (
    <div className="flex h-10 items-stretch justify-between border-t border-[#122d42] bg-linear-to-r from-[#24526f] via-[#1f5f90] via-65% to-[#1c3a4d]">
      <div className="flex items-center">
        <button aria-label="开始菜单" className="ml-2">
          <svg width="38" height="38" viewBox="0 0 38 38" aria-hidden="true">
            <defs>
              <radialGradient id="orb" cx=".5" cy=".9" r=".9">
                <stop offset="0" stopColor="#5cd6ff" />
                <stop offset=".5" stopColor="#1d5e90" />
                <stop offset="1" stopColor="#8fb6cc" />
              </radialGradient>
            </defs>
            <circle cx="19" cy="19" r="18" fill="url(#orb)" stroke="#143a57" />
            <path d="M10 12q4-3 8-1l-1 7q-4-2-8 0z" fill="#ea6030" />
            <path d="M20 12q4 2 8-1l-1 8q-4 2-8-1z" fill="#8cc63e" />
            <path d="M9 20q4-2 8 0l-1 7q-4-2-8 0z" fill="#3aa3e3" />
            <path d="M19 20q4 2 8 0l-1 7q-4 3-8 0z" fill="#f7c92f" />
          </svg>
        </button>
        <div className="ml-3 h-6 w-1.5 border-x border-dotted border-[#153a55]" />
        <button aria-label="UC 浏览器" className="ml-6">
          <svg width="33" height="33" viewBox="0 0 32 32" aria-hidden="true">
            <circle cx="16" cy="16" r="15.500" fill="#ee7a1d" />
            <path d="M6 21c0-5 3-7 7-8 2-5 8-7 13-4l-4 1 5 3c2 3 1 6-2 8l-2-4-5 4-6 5-1-4z" fill="#fbe9da" />
          </svg>
        </button>
        <button aria-label="Internet Explorer" className="ml-[30px]">
          <svg width="31" height="31" viewBox="0 0 32 32" aria-hidden="true">
            <circle cx="16" cy="16" r="15" fill="#3f92dc" stroke="#dceffa" strokeWidth="2" />
            <path d="M24 21c-4 6-15 4-16-5 0-10 16-11 17 0H10" fill="none" stroke="#fff" strokeWidth="3.600" />
          </svg>
        </button>
        <div className="ml-[14px] flex h-full">
          <button aria-label="资源管理器" className="flex w-[60px] items-center justify-center rounded-sm border border-[#7ba0b8]/70 bg-linear-to-b from-[#7d9fb3] to-[#3a6682]">
            <svg width="34" height="32" viewBox="0 0 34 32" aria-hidden="true">
              <path d="M2 4h12l2 3h16v21H2z" fill="#efd56f" stroke="#b6963c" />
              <path d="M4 8h26" stroke="#fff3bd" strokeWidth="3" />
              <path d="M7 30v-8q0-3 3-3h14q3 0 3 3v8h-4v-6H11v6z" fill="#8ccdf0" stroke="#4b95c2" />
            </svg>
          </button>
          <button aria-label="MindManager" className="ml-0.5 flex w-[56px] items-center justify-center rounded-sm border border-[#c6d6e0] bg-linear-to-b from-[#bccbd4] to-[#7895a6]">
            <svg width="30" height="26" viewBox="0 0 30 26" aria-hidden="true">
              <path d="M0 1h8l5 10-5 14H0z" fill="#e11f26" />
              <path d="M14 12l8-11h8v24H18z" fill="#8b9196" />
              <path d="M14 12l5 13h-8z" fill="#4c5359" />
            </svg>
          </button>
          <button aria-label="录像" className="ml-2 flex w-[60px] items-center justify-center rounded-sm border border-[#6c93ad]/70 bg-linear-to-b from-[#4e7894] to-[#275575]">
            <svg width="33" height="33" viewBox="0 0 32 32" aria-hidden="true">
              <circle cx="16" cy="16" r="15" fill="#0c0c0c" stroke="#b9b9b9" strokeWidth="1.500" />
              <circle cx="16" cy="16" r="9" fill="#f60d0d" />
            </svg>
          </button>
          <button aria-label="360 浏览器" className="ml-0.5 flex w-[60px] items-center justify-center rounded-sm border border-[#6c93ad]/70 bg-linear-to-b from-[#4e7894] to-[#275575]">
            <svg width="31" height="31" viewBox="0 0 32 32" aria-hidden="true">
              <circle cx="16" cy="16" r="15" fill="#63bf2e" stroke="#e2f3d6" strokeWidth="1.500" />
              <path d="M24 21c-4 6-15 4-16-5 0-10 16-11 17 0H10" fill="none" stroke="#fff" strokeWidth="3.600" />
            </svg>
          </button>
        </div>
      </div>
      <div className="flex items-center text-white">
        <div className="mr-3 h-6 w-1.5 border-x border-dotted border-[#153a55]" />
        <span className="text-[10px]">CK</span>
        <div className="ml-2 flex items-center gap-2">
          <Icon>
            <path d="M.5 5.500h15v9H.5z" fill="#c9cdd0" stroke="#888" />
            <path d="M2 8h12M2 10h12M4 12.500h8" stroke="#777" strokeDasharray="1.500 .8" />
            <path d="M8 5q0-3 4-4" fill="none" stroke="#bbb" />
          </Icon>
          <span className="w-4 text-center text-[7px]">▲</span>
          <Icon>
            <path d="M5 1h6v5H5z" fill="#9cc8e0" />
            <rect x="3" y="5" width="10" height="10" rx="4" fill="#3fa4dd" />
            <circle cx="8" cy="10" r="2" fill="#d2edfb" />
          </Icon>
          <Icon>
            <circle cx="8" cy="8" r="7" fill="#250808" stroke="#777" />
            <circle cx="8" cy="9" r="4" fill="#e21212" />
          </Icon>
          <Icon>
            <circle cx="7" cy="7" r="6.500" fill="#250808" stroke="#777" />
            <circle cx="7" cy="8" r="4" fill="#e21212" />
            <path d="M9 10h7v5H9z" fill="#fff" />
          </Icon>
          <Icon>
            <path d="M1 5.500h3l4-4v13l-4-4H1z" fill="#fff" />
            <path d="M10 5q2 3 0 6M12.500 3q4 5 0 10" fill="none" stroke="#fff" strokeWidth="1.200" />
          </Icon>
          <Icon>
            <path d="M5 4.500h10v8H5zM8 15h6" fill="#35566b" stroke="#fff" strokeWidth="1.500" />
            <path d="M1 1h4v4H1zM3 5v5h3" fill="none" stroke="#fff" strokeWidth="1.500" />
          </Icon>
        </div>
        <div className="ml-2 flex w-[76px] flex-col items-center text-[12px] leading-[18px]">
          <span>16:20</span>
          <span>2016/10/22</span>
        </div>
        <button aria-label="显示桌面" className="h-full w-[14px] border border-[#5b7d91] bg-linear-to-r from-[#2f556c] to-[#5d7f92]" />
      </div>
    </div>
  );
}

function SpeedBall() {
  return (
    <div className="absolute right-[53px] bottom-[391px] flex h-[60px] w-[119px] items-center">
      <div className="absolute right-0 flex h-[43px] w-[90px] flex-col justify-center gap-1 rounded-r-full bg-[#2e303d] pr-2.5 pl-[36px] text-[10px] leading-4 text-[#b9bcc6]">
        <div className="flex items-center justify-between">
          <span className="size-1 rounded-full bg-[#52a8e0]" />
          <span><b className="text-white">0</b>K/s</span>
        </div>
        <div className="flex items-center justify-between">
          <span className="size-1 rounded-full bg-[#2fb457]" />
          <span><b className="text-white">0</b>K/s</span>
        </div>
      </div>
      <div className="relative flex size-[60px] items-center justify-center rounded-full bg-[#474a59] text-[#e4e6ec] shadow">
        <svg width="60" height="60" viewBox="0 0 60 60" className="absolute inset-0" fill="none" strokeWidth="2" aria-hidden="true">
          <path d="M31 5A25 25 0 0 1 55 33" stroke="#5cc0a8" />
          <path d="M55 33A25 25 0 0 1 23 54" stroke="#b3bf55" />
        </svg>
        <span className="text-[22px]">55</span>
        <span className="pt-2 text-[9px]">%</span>
      </div>
    </div>
  );
}

export default function App() {
  return (
    <div className="relative flex h-screen min-h-[720px] flex-col overflow-hidden bg-[#c3d6eb] font-[Open_Sans,Noto_Sans_CJK_SC,sans-serif]">
      <Header />
      <div className="flex min-h-0 flex-1 gap-1 pl-[3px]">
        <div className="flex min-w-0 flex-1 pt-2">
          <Workspace />
        </div>
        <Library />
      </div>
      <StatusBar />
      <Taskbar />
      <SpeedBall />
      <div className="pointer-events-none absolute top-[50px] right-[80px] text-[54px] leading-[40px] font-bold text-white/50">搜狐视频</div>
    </div>
  );
}
